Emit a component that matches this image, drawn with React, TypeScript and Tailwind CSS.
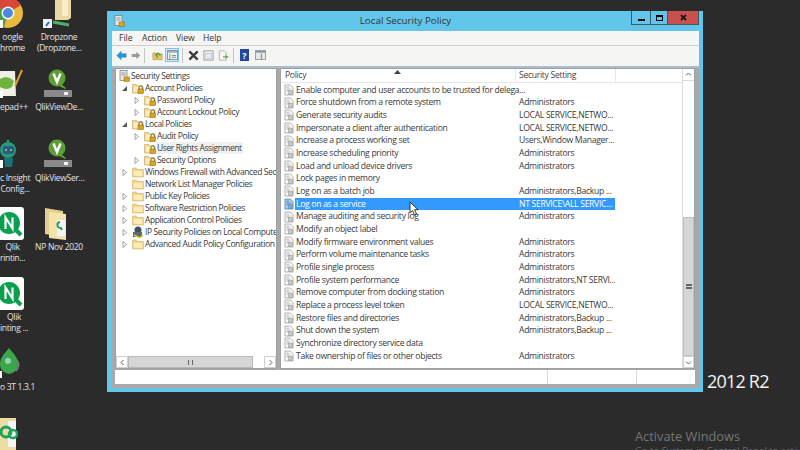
import React from "react";

const font = { fontFamily: '"Open Sans", "Noto Sans", sans-serif' };

function LockFolder() {
  return (
    <svg width="12" height="12" viewBox="0 0 12 12" className="shrink-0">
      <path d="M0.500 2.500h4l1 1.500h5.500v7h-10.500z" fill="#f5dc9a" stroke="#c9a860" strokeWidth="0.7" />
      <rect x="2" y="5" width="8" height="5" fill="#fbeec6" />
      <rect x="6" y="7" width="5.500" height="4.500" fill="#d9a520" stroke="#8a6510" strokeWidth="0.5" />
      <path d="M7 7V5.500a1.700 1.700 0 0 1 3.400 0V7" fill="none" stroke="#6b5a30" strokeWidth="0.9" />
    </svg>
  );
}

function Folder() {
  return (
    <svg width="12" height="12" viewBox="0 0 12 12" className="shrink-0">
      <path d="M0.500 2h4l1 1.500h6v7.500h-11z" fill="#f3d48a" stroke="#d2b26a" strokeWidth="0.6" />
      <rect x="1.500" y="5" width="9" height="5" fill="#fbe9b8" />
    </svg>
  );
}

function PolicyIcon({ selected = false }: { selected?: boolean }) {
  return (
    <svg width="10" height="12" viewBox="0 0 11 12" className="shrink-0">
      <path d="M1 .5h6l3 3v8h-9z" fill={selected ? "#a9c9e8" : "#f6f6f6"} stroke={selected ? "#4f7fae" : "#9a9a9a"} strokeWidth="0.8" />
      <path d="M2.500 3h3M2.500 5h5M2.500 7h2" stroke={selected ? "#4f7fae" : "#a8a8a8"} strokeWidth="0.8" />
      <rect x="5" y="6.500" width="4.500" height="4.500" fill={selected ? "#7ba6d0" : "#c7c7c7"} stroke={selected ? "#4f7fae" : "#8c8c8c"} strokeWidth="0.5" />
    </svg>
  );
}

function Chevron({ open }: { open?: boolean }) {
  if (open) {
    return (
      <svg width="7" height="7" viewBox="0 0 7 7" className="shrink-0">
        <path d="M6 1v5H1z" fill="#595959" />
      </svg>
    );
  }
  return (
    <svg width="7" height="7" viewBox="0 0 7 7" className="shrink-0">
      <path d="M2 .500l3.500 3-3.500 3z" fill="#fff" stroke="#8c8c8c" strokeWidth="0.8" />
    </svg>
  );
}

type TreeItem = { label: string; level: number; chevron?: "open" | "closed"; icon: "lock" | "folder" | "ip" | "root"; selected?: boolean };

const tree: TreeItem[] = [
  { label: "Security Settings", level: 0, icon: "root" },
  { label: "Account Policies", level: 1, chevron: "open", icon: "lock" },
  { label: "Password Policy", level: 2, chevron: "closed", icon: "lock" },
  { label: "Account Lockout Policy", level: 2, chevron: "closed", icon: "lock" },
  { label: "Local Policies", level: 1, chevron: "open", icon: "lock" },
  { label: "Audit Policy", level: 2, chevron: "closed", icon: "lock" },
  { label: "User Rights Assignment", level: 2, icon: "lock", selected: true },
  { label: "Security Options", level: 2, chevron: "closed", icon: "lock" },
  { label: "Windows Firewall with Advanced Security", level: 1, chevron: "closed", icon: "folder" },
  { label: "Network List Manager Policies", level: 1, icon: "folder" },
  { label: "Public Key Policies", level: 1, chevron: "closed", icon: "folder" },
  { label: "Software Restriction Policies", level: 1, chevron: "closed", icon: "folder" },
  { label: "Application Control Policies", level: 1, chevron: "closed", icon: "folder" },
  { label: "IP Security Policies on Local Computer", level: 1, chevron: "closed", icon: "ip" },
  { label: "Advanced Audit Policy Configuration", level: 1, chevron: "closed", icon: "folder" },
];

const policies: [string, string][] = [
  ["Enable computer and user accounts to be trusted for delega...", ""],
  ["Force shutdown from a remote system", "Administrators"],
  ["Generate security audits", "LOCAL SERVICE,NETWO..."],
  ["Impersonate a client after authentication", "LOCAL SERVICE,NETWO..."],
  ["Increase a process working set", "Users,Window Manager..."],
  ["Increase scheduling priority", "Administrators"],
  ["Load and unload device drivers", "Administrators"],
  ["Lock pages in memory", ""],
  ["Log on as a batch job", "Administrators,Backup ..."],
  ["Log on as a service", "NT SERVICE\\ALL SERVIC..."],
  ["Manage auditing and security log", "Administrators"],
  ["Modify an object label", ""],
  ["Modify firmware environment values", "Administrators"],
  ["Perform volume maintenance tasks", "Administrators"],
  ["Profile single process", "Administrators"],
  ["Profile system performance", "Administrators,NT SERVI..."],
  ["Remove computer from docking station", "Administrators"],
  ["Replace a process level token", "LOCAL SERVICE,NETWO..."],
  ["Restore files and directories", "Administrators,Backup ..."],
  ["Shut down the system", "Administrators,Backup ..."],
  ["Synchronize directory service data", ""],
  ["Take ownership of files or other objects", "Administrators"],
];

function QlikV({ className }: { className: string }) {
  return (
    <div className={className}>
      <svg width="30" height="32" viewBox="0 0 30 32">
        <circle cx="14" cy="10" r="8.500" fill="#5d9e35" />
        <path d="M18 16l5 4-1 1-6-3z" fill="#5d9e35" />
        <path d="M10.500 5.500l3.500 8.500 3.500-8.500" fill="none" stroke="#fff" strokeWidth="2.400" />
        <rect x="1" y="22" width="28" height="7" fill="#8a8a8a" />
        <rect x="21" y="24" width="4" height="3" fill="#f2f2f2" />
      </svg>
    </div>
  );
}

function QlikN({ className }: { className: string }) {
  return (
    <div className={`${className} flex h-[33px] w-[24px] items-center justify-center rounded-r-[3px] bg-white`}>
      <svg width="24" height="30" viewBox="0 0 24 30">
        <circle cx="9" cy="14" r="11" fill="#0a9f4f" />
        <path d="M16 21l5 5" stroke="#0a9f4f" strokeWidth="4" />
        <path d="M5.500 20V8.500l7 11V8.500" fill="none" stroke="#fff" strokeWidth="2.200" />
      </svg>
    </div>
  );
}

function DeskLabel({ lines, className }: { lines: string[]; className: string }) {
  return (
    <div className={`${className} text-center text-[8.500px] leading-[11px] tracking-[-0.3px] whitespace-nowrap text-[#e4e4ea]`}>
      {lines.map((l) => (
        <div key={l}>{l}</div>
      ))}
    </div>
  );
}

function Desktop() {
  return (
    <>
      {/* chrome */}
      <div className="absolute top-[-3px] left-[-8px]">
        <svg width="32" height="32" viewBox="0 0 32 32">
          <circle cx="16" cy="16" r="15" fill="#e8b93c" />
          <path d="M16 16L3 8A15 15 0 0 1 29 8z" fill="#d8473b" />
          <path d="M16 16L3 8A15 15 0 0 0 12 30z" fill="#4a9f4a" />
          <circle cx="16" cy="16" r="6.500" fill="#fff" />
          <circle cx="16" cy="16" r="5" fill="#4a8be0" />
        </svg>
      </div>
      <div className="absolute top-[20px] left-0 h-[8px] w-[3px] bg-white" />
      <DeskLabel className="absolute top-[31px] left-0" lines={["oogle", "hrome"]} />
      {/* dropzone */}
      <div className="absolute top-0 left-[43px]">
        <svg width="28" height="29" viewBox="0 0 28 29">
          <path d="M12 0h16v18l-3 2H12z" fill="#e9d9a0" />
          <path d="M19 0h6v16h-6z" fill="#f7edc8" />
          <rect x="0" y="19" width="9" height="9" fill="#f0f0f0" />
          <path d="M3 26l3-4" stroke="#1f6fc9" strokeWidth="2" />
          <path d="M10 22l16 3" stroke="#4fb06a" strokeWidth="3" />
        </svg>
      </div>
      <DeskLabel className="absolute top-[31px] left-[37px] w-[44px]" lines={["Dropzone", "(Dropzone..."]} />
      {/* notepad */}
      <div className="absolute top-[69px] left-0">
        <svg width="24" height="29" viewBox="0 0 24 29">
          <path d="M0 2h15l1 25H0z" fill="#eef0e4" />
          <path d="M0 10c5-3 10-2 14 2l-2 6c-4 3-9 2-12 0z" fill="#6fb23c" />
          <path d="M15 17L22 1" stroke="#e0a030" strokeWidth="2" />
          <rect x="0" y="22" width="3" height="7" fill="#fff" />
        </svg>
      </div>
      <DeskLabel className="absolute top-[101px] left-0" lines={["epad++"]} />
      <QlikV className="absolute top-[68px] left-[43px]" />
      <DeskLabel className="absolute top-[101px] left-[35px] w-[48px]" lines={["QlikViewDe..."]} />
      {/* bot */}
      <div className="absolute top-[139px] left-0">
        <svg width="17" height="29" viewBox="0 0 17 29">
          <circle cx="8" cy="2" r="1.300" fill="#21a36b" />
          <ellipse cx="8" cy="11" rx="8" ry="8" fill="#1f9e7c" />
          <rect x="3" y="7" width="11" height="8" rx="2" fill="#35557f" />
          <circle cx="6" cy="11" r="1" fill="#7ee0b0" />
          <circle cx="11" cy="11" r="1" fill="#7ee0b0" />
          <path d="M4 19h9l-1 9H5z" fill="#1d6f7c" />
          <rect x="0" y="21" width="3" height="8" fill="#fff" />
        </svg>
      </div>
      <DeskLabel className="absolute top-[172px] left-0" lines={["c Insight", "Config..."]} />
      <QlikV className="absolute top-[138px] left-[43px]" />
      <DeskLabel className="absolute top-[172px] left-[35px] w-[48px]" lines={["QlikViewSer..."]} />
      {/* Qlik N */}
      <QlikN className="absolute top-[207px] left-0" />
      <DeskLabel className="absolute top-[241px] left-0" lines={["Qlik", "rintin..."]} />
      {/* NP folder */}
      <div className="absolute top-[208px] left-[44px]">
        <svg width="24" height="32" viewBox="0 0 24 32">
          <path d="M1 0l18 3v26l-18-3z" fill="#e6cf8c" />
          <path d="M5 4l17 2v26l-17-2z" fill="#f3e3ad" />
          <path d="M13 12h8v16h-8z" fill="#f5f5f5" />
          <path d="M16 14a3 3 0 1 0 1 6l1 2" stroke="#2f9e5a" strokeWidth="2" fill="none" />
        </svg>
      </div>
      <DeskLabel className="absolute top-[241px] left-[35px] w-[48px]" lines={["NP Nov 2020"]} />
      <QlikN className="absolute top-[277px] left-0" />
      <DeskLabel className="absolute top-[311px] left-0" lines={["Qlik", "inting ..."]} />
      {/* leaf */}
      <div className="absolute top-[348px] left-0">
        <svg width="20" height="30" viewBox="0 0 20 30">
          <path d="M9 0c5 6 9 10 9 16s-4 9-9 10c-5-1-9-4-9-10S4 6 9 0z" fill="#3ba64a" />
          <circle cx="8" cy="13" r="3" fill="#9ccfb0" />
          <path d="M17 12c3 3 2 8-1 11" fill="none" stroke="#7a7a7a" strokeWidth="1.500" />
          <rect x="0" y="23" width="2" height="7" fill="#fff" />
        </svg>
      </div>
      <DeskLabel className="absolute top-[381px] left-0" lines={["o 3T 1.3.1"]} />
      {/* bottom folder */}
      <div className="absolute top-[418px] left-0">
        <svg width="18" height="32" viewBox="0 0 18 32">
          <path d="M0 0h16v32H0z" fill="#eddca4" />
          <path d="M8 3h8v26H8z" fill="#f5f5f5" />
          <circle cx="6" cy="14" r="5" fill="none" stroke="#1fa35a" strokeWidth="3" />
          <circle cx="13" cy="16" r="4" fill="none" stroke="#1fa35a" strokeWidth="2.500" />
        </svg>
      </div>
      <div className="absolute top-[369px] left-[707px] text-[18px] leading-[24px] tracking-[-0.8px] text-[#f4f4f4]">2012 R2</div>
      <div className="absolute top-[427px] left-[635px] text-[12.800px] leading-[18px] whitespace-nowrap text-[#767676]">Activate Windows</div>
      <div className="absolute top-[445px] left-[635px] text-[9.500px] leading-[12px] whitespace-nowrap text-[#6a6a6a]">Go to System in Control Panel to activate</div>
    </>
  );
}

function ToolSep({ className }: { className: string }) {
  return <div className={`${className} h-[15px] w-px shrink-0 bg-[#c4c4c4]`} />;
}

function Toolbar() {
  return (
    <div className="flex h-[20px] shrink-0 items-center bg-[#f5f5f3] pb-[2px] pl-[4px]">
      <svg width="11" height="11" viewBox="0 0 13 12" className="shrink-0">
        <path d="M6 1L1 6l5 5V8h6V4H6z" fill="#1f9ae0" stroke="#2373b0" strokeWidth="0.5" />
      </svg>
      <svg width="10" height="11" viewBox="0 0 13 12" className="ml-[4px] shrink-0">
        <path d="M7 1l5 5-5 5V8H1V4h6z" fill="#9a9a9a" />
      </svg>
      <ToolSep className="ml-[3px]" />
      <svg width="11" height="11" viewBox="0 0 13 12" className="ml-[7px] shrink-0">
        <path d="M1 3h4l1 1h6v7H1z" fill="#e8c564" stroke="#ab8a38" strokeWidth="0.6" />
        <path d="M6 9V5M4 6l3-3 3 3" stroke="#3a9a3a" strokeWidth="1.300" fill="none" />
      </svg>
      <div className="ml-[2px] flex h-[14px] w-[14px] shrink-0 items-center justify-center border border-[#7ec4ea] bg-[#d4ecfa]">
        <svg width="11" height="10" viewBox="0 0 12 11">
          <rect x=".5" y=".5" width="11" height="10" fill="#f6f6f6" stroke="#8a8a8a" />
          <rect x="1" y="1" width="10" height="2" fill="#9ab0c0" />
          <path d="M3 4v6M5 6h5M5 8h5" stroke="#6e8f6e" />
        </svg>
      </div>
      <ToolSep className="ml-[3px]" />
      <svg width="11" height="11" viewBox="0 0 12 12" className="ml-[5px] shrink-0">
        <path d="M1.500 1.500l9 9M10.500 1.500l-9 9" stroke="#3c3c3c" strokeWidth="2.600" />
      </svg>
      <svg width="11" height="11" viewBox="0 0 12 12" className="ml-[4px] shrink-0">
        <rect x="1" y="1" width="10" height="10" fill="#f4f4f4" stroke="#9a9a9a" />
        <rect x="3" y="4" width="6" height="5" fill="#e4eef6" stroke="#9cb6c8" strokeWidth="0.6" />
      </svg>
      <svg width="11" height="11" viewBox="0 0 13 12" className="ml-[4px] shrink-0">
        <path d="M1.500.5h6l2 2v9h-8z" fill="#f6f6f6" stroke="#9a9a9a" strokeWidth="0.8" />
        <path d="M6 7h3V5l3.500 2.500L9 10V8.500H6z" fill="#58b04a" />
      </svg>
      <ToolSep className="ml-[4px]" />
      <div className="ml-[6px] flex h-[12px] w-[9px] shrink-0 items-center justify-center bg-[#24479e] text-[9px] leading-none font-bold text-white">?</div>
      <svg width="11" height="10" viewBox="0 0 12 11" className="ml-[6px] shrink-0">
        <rect x=".5" y=".5" width="11" height="10" fill="#e8e8e8" stroke="#9a9a9a" />
        <rect x="1" y="1" width="10" height="2" fill="#8c9aa6" />
        <path d="M7 4v6" stroke="#7a7a7a" />
      </svg>
    </div>
  );
}

function TreeRow({ item }: { item: TreeItem }) {
  const pad = item.level === 0 ? "pl-[3px]" : item.level === 1 ? "pl-[5px]" : "pl-[17px]";
  return (
    <div className={`flex h-[12px] items-center whitespace-nowrap ${pad}`}>
      {item.level > 0 && (
        <div className="flex w-[11px] shrink-0 items-center">
          {item.chevron ? <Chevron open={item.chevron === "open"} /> : null}
        </div>
      )}
      {item.icon === "lock" && <LockFolder />}
      {item.icon === "folder" && <Folder />}
      {item.icon === "root" && (
        <svg width="11" height="12" viewBox="0 0 11 12" className="shrink-0">
          <rect x="1" y="0.500" width="7" height="10" fill="#e8e8e8" stroke="#777" strokeWidth="0.7" />
          <path d="M2.500 3h4M2.500 5h4" stroke="#777" strokeWidth="0.7" />
          <rect x="5" y="7" width="5.500" height="4.500" fill="#d9a520" stroke="#8a6510" strokeWidth="0.5" />
        </svg>
      )}
      {item.icon === "ip" && (
        <svg width="12" height="12" viewBox="0 0 12 12" className="shrink-0">
          <circle cx="6" cy="4" r="3.500" fill="#40505f" />
          <rect x="1" y="6" width="9" height="5" fill="#5c6a78" />
          <path d="M2 9l6 3 3-3" stroke="#d8d02c" strokeWidth="1.500" fill="none" />
        </svg>
      )}
      <div
        className={`shrink-0 px-px text-[8.500px] leading-[12px] tracking-[-0.4px] text-[#3a3a3a] ${item.selected ? "bg-[#f0f0f0]" : ""}`}
      >
        {item.label}
      </div>
    </div>
  );
}

function Arrow({ d }: { d: string }) {
  return (
    <svg width="7" height="7" viewBox="0 0 7 7">
      <path d={d} fill="none" stroke="#606060" strokeWidth="1" />
    </svg>
  );
}

function TreePane() {
  return (
    <div className="flex w-[162px] shrink-0 flex-col overflow-hidden border border-[#a0a0a0] bg-white">
      <div className="min-h-0 flex-1 overflow-hidden pt-[1px]">
        {tree.map((t) => (
          <TreeRow key={t.label} item={t} />
        ))}
      </div>
      <div className="flex h-[12px] shrink-0 items-stretch bg-[#fafafa]">
        <div className="flex w-[12px] items-center justify-center border border-[#d0d0d0] bg-white">
          <Arrow d="M4.500 1L2 3.500 4.500 6" />
        </div>
        <div className="flex w-[125px] items-center justify-center border border-[#b8b8b8] bg-[#d6d6d6]">
          <div className="h-[5px] w-[5px] border-x border-[#666]" />
        </div>
        <div className="flex-1 bg-white" />
        <div className="flex w-[12px] items-center justify-center border border-[#d0d0d0] bg-white">
          <Arrow d="M2.500 1L5 3.500 2.500 6" />
        </div>
      </div>
    </div>
  );
}

function ListPane() {
  return (
    <div className="flex min-w-0 flex-1 border border-[#a0a0a0] bg-white">
      <div className="flex min-w-0 flex-1 flex-col">
        <div className="flex h-[14px] shrink-0 border-b border-[#e4e7ee] text-[8.600px] leading-[13px] tracking-[-0.3px] text-[#444]">
          <div className="relative w-[235px] border-r border-[#e4e7ee] pl-[4px]">
            Policy
            <svg width="7" height="4" viewBox="0 0 7 4" className="absolute top-[1px] left-[113px]">
              <path d="M3.500 0L7 4H0z" fill="#444" />
            </svg>
          </div>
          <div className="w-[100px] border-r border-[#e4e7ee] pl-[3px]">Security Setting</div>
        </div>
        <div className="flex flex-col pt-[0.500px]">
          {policies.map(([p, s]) => {
            const sel = p === "Log on as a service";
            return (
              <div key={p} className="flex h-[12.680px] items-center text-[8.600px] leading-[12px] tracking-[-0.3px] whitespace-nowrap text-[#3a3a3a]">
                <div className="flex w-[14px] shrink-0 justify-end pr-px">
                  <PolicyIcon selected={sel} />
                </div>
                <div className={`h-full w-[221px] shrink-0 pl-px ${sel ? "bg-[#3399ff] text-white" : ""}`}>{p}</div>
                <div className={`h-full w-[99px] shrink-0 overflow-hidden pl-[3px] ${sel ? "bg-[#3399ff] text-white" : ""}`}>{s}</div>
              </div>
            );
          })}
        </div>
      </div>
      <div className="flex w-[12px] shrink-0 flex-col border-l border-[#dcdcdc] bg-white">
        <div className="flex h-[12px] items-center justify-center border-b border-[#d8d8d8]">
          <Arrow d="M1 4.500L3.500 2 6 4.500" />
        </div>
        <div className="h-[136px]" />
        <div className="flex flex-1 flex-col items-center justify-center border border-[#c0c0c0] bg-[#d6d6d6]">
          <div className="h-[5px] w-[6px] border-y-2 border-double border-[#666]" />
        </div>
        <div className="flex h-[12px] items-center justify-center border border-[#d0d0d0]">
          <Arrow d="M1 2.500L3.500 5 6 2.500" />
        </div>
      </div>
    </div>
  );
}

export default function App() {
  return (
    <div className="relative h-[450px] w-[800px] overflow-hidden bg-[#2b2b2b]" style={font}>
      <Desktop />
      {/* application window */}
      <div className="absolute top-[11px] left-[107px] flex h-[381px] w-[596px] flex-col bg-[#62c6ea] px-[5px] pr-[4px] pb-[4px]">
        <div className="relative flex h-[20px] shrink-0 items-center justify-center">
          <svg width="11" height="12" viewBox="0 0 11 12" className="absolute top-[4px] left-[2px]">
            <rect x="1" y=".5" width="7" height="10" fill="#e8e8e8" stroke="#777" strokeWidth="0.7" />
            <path d="M2.500 3h4M2.500 5h4" stroke="#777" strokeWidth="0.7" />
            <rect x="5" y="7" width="5.500" height="4.500" fill="#d9a520" stroke="#8a6510" strokeWidth="0.5" />
          </svg>
          <div className="text-[9.800px] leading-[14px] text-[#333]">Local Security Policy</div>
          <div className="absolute top-0 right-0 flex h-[14px] border border-t-0 border-[#3a5a6a]">
            <div className="flex w-[19px] items-end justify-center border-r border-[#3a5a6a] pb-[3px]">
              <div className="h-[2px] w-[7px] bg-black" />
            </div>
            <div className="flex w-[17px] items-center justify-center border-r border-[#3a5a6a]">
              <div className="h-[6px] w-[7px] border border-t-2 border-black" />
            </div>
            <div className="flex w-[30px] items-center justify-center bg-[#c9504c] text-[#1a1a1a]">
              <svg width="7" height="7" viewBox="0 0 7 7">
                <path d="M1 1l5 5M6 1L1 6" stroke="#1a1a1a" strokeWidth="1.800" />
              </svg>
            </div>
          </div>
        </div>
        <div className="flex min-h-0 flex-1 flex-col">
          <div className="flex h-[15px] shrink-0 items-center border-b border-[#cfcfcf] bg-[#f5f5f3] pl-[7px] text-[8.600px] leading-[12px] text-[#333]">
            <span className="w-[23px]">File</span>
            <span className="w-[34px]">Action</span>
            <span className="w-[27px]">View</span>
            <span>Help</span>
          </div>
          <Toolbar />
          <div className="flex min-h-0 flex-1 flex-col bg-[#a9a9a9]">
            <div className="flex min-h-0 flex-1 gap-[3px] border-t-2 border-[#a9bdd0] pr-[4px] pl-[3px]">
              <TreePane />
              <ListPane />
            </div>
            <div className="mt-[1px] mr-[4px] mb-[4px] ml-[3px] flex h-[14px] shrink-0 bg-white">
              <div className="w-[433px] border-r border-[#d8d8d8]" />
              <div className="w-[89px] border-r border-[#d8d8d8]" />
              <div className="flex-1" />
            </div>
          </div>
        </div>
      </div>
      {/* mouse pointer */}
      <svg width="10" height="15" viewBox="0 0 10 15" className="absolute top-[201px] left-[409px]">
        <path d="M1 1v11l2.500-2.500 2 4.500 2-1-2-4.300H9z" fill="#fff" stroke="#222" strokeWidth="0.9" />
      </svg>
    </div>
  );
}
